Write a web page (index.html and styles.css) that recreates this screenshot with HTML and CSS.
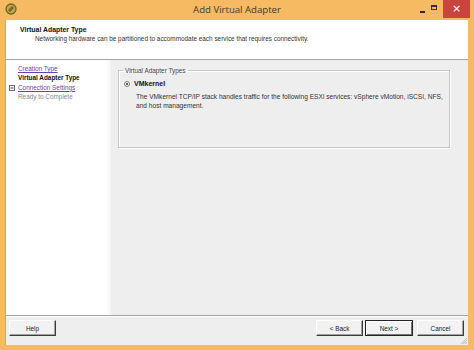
FILE: index.html
```html
<!DOCTYPE html>
<html>
<head>
<meta charset="utf-8">
<link rel="stylesheet" href="styles.css">
</head>
<body>
<div class="window">
  <div class="titlebar">
    <svg class="app-icon" width="12" height="12" viewBox="0 0 12 12">
      <circle cx="6" cy="6" r="5" fill="#c9a24a" stroke="#6b6a2a" stroke-width="1.3"/>
      <path d="M3.5 7.5 L7.5 3.5 M4.5 8.5 L8.5 4.5" stroke="#5d6a22" stroke-width="1.2"/>
    </svg>
    <div class="title">Add Virtual Adapter</div>
    <div class="controls">
      <span class="ctl min"><span class="min-bar"></span></span>
      <span class="ctl max"><span class="max-box"></span></span>
      <span class="ctl close">×</span>
    </div>
  </div>
  <div class="frame">
    <div class="header">
      <div class="h-title">Virtual Adapter Type</div>
      <div class="h-sub">Networking hardware can be partitioned to accommodate each service that requires connectivity.</div>
    </div>
    <div class="main">
      <div class="nav">
        <div class="nav-item link">Creation Type</div>
        <div class="nav-item current">Virtual Adapter Type</div>
        <div class="nav-item link has-box"><svg class="expander" width="6" height="6" viewBox="0 0 6 6"><rect x="0.5" y="0.5" width="5" height="5" fill="#fff" stroke="#6a6a6a"/><path d="M1.5 3 H4.5" stroke="#333"/></svg>Connection Settings</div>
        <div class="nav-item pending">Ready to Complete</div>
      </div>
      <div class="content">
        <fieldset class="group">
          <legend>Virtual Adapter Types</legend>
          <div class="option">
            <span class="radio"><span class="dot"></span></span>
            <span class="opt-label">VMkernel</span>
          </div>
          <p class="desc">The VMkernel TCP/IP stack handles traffic for the following ESXi services: vSphere vMotion, iSCSI, NFS,<br>and host management.</p>
        </fieldset>
      </div>
    </div>
    <div class="footer">
      <button class="btn">Help</button>
      <div class="spacer"></div>
      <button class="btn">&lt; Back</button>
      <button class="btn default">Next &gt;</button>
      <button class="btn cancel">Cancel</button>
      <svg class="grip" width="8" height="8" viewBox="0 0 8 8">
        <path d="M7 1 L1 7 M7 3 L3 7 M7 5 L5 7" stroke="#b0b0b0" stroke-width="0.8"/>
      </svg>
    </div>
  </div>
</div>
</body>
</html>
```
FILE: styles.css
```css
* { box-sizing: border-box; }
html, body { margin: 0; padding: 0; }
body {
  width: 474px;
  height: 350px;
  overflow: hidden;
  font-family: "Liberation Sans", Arial, sans-serif;
  font-size: 6.4px;
  color: #222;
}
.window {
  width: 474px;
  height: 350px;
  background: #f6ba63;
  display: flex;
  flex-direction: column;
}
.titlebar {
  height: 20px;
  display: flex;
  align-items: center;
  position: relative;
  flex: none;
}
.app-icon { margin-left: 5px; margin-top: -2px; }
.title {
  position: absolute;
  left: 0; right: 0; top: 3px;
  text-align: center;
  font-family: "Open Sans", "Liberation Sans", sans-serif;
  font-size: 9.6px;
  color: #3a3a3a;
}
.controls {
  margin-left: auto;
  display: flex;
  align-self: flex-start;
  height: 18px;
  margin-right: 4px;
  position: relative;
}
.ctl { display: flex; align-items: center; justify-content: center; height: 18px; }
.min { width: 12px; }
.min-bar { display: block; width: 5px; height: 2px; background: #2a2a2a; margin-top: 6px; }
.max { width: 12px; }
.max-box { display: block; width: 6px; height: 5px; border: 1px solid #333; border-top-width: 2px; margin-top: -4px; }
.close {
  width: 27px;
  margin-left: 3px;
  background: #c8443c;
  color: #fff;
  font-size: 11px;
  font-family: "DejaVu Sans", sans-serif;
  line-height: 18px;
}
.frame {
  flex: 1;
  margin: 0 6px 5px 5px;
  background: #eeeeee;
  border-left: 1px solid #b3aaa0;
  display: flex;
  flex-direction: column;
}
.header {
  height: 40px;
  background: #fff;
  border-bottom: 1px solid #a3a3a3;
  padding: 5px 0 0 14px;
  flex: none;
}
.h-title { font-weight: bold; font-size: 6.9px; color: #111; line-height: 9px; }
.h-sub { padding-left: 15px; line-height: 9px; color: #333; }
.main { flex: 1; display: flex; }
.nav {
  width: 105px;
  flex: none;
  background: linear-gradient(to right, #fff 0, #fff 100px, #f4f4f4 105px);
  padding: 4px 0 0 12px;
}
.nav-item { line-height: 9.4px; height: 9.4px; white-space: nowrap; }
.link { color: #6a3fb0; text-decoration: underline; }
.current { font-weight: bold; color: #111; }
.pending { color: #8a8a8a; }
.has-box { position: relative; }
.expander { position: absolute; left: -9px; top: 2px; }
.content { flex: 1; min-width: 0; padding: 7px 18px 0 7px; }
.group {
  margin: 0;
  min-width: 0;
  height: 81px;
  border: 1px solid #c6c6c6;
  box-shadow: inset 1px 1px 0 #fff, 1px 1px 0 #fff;
  padding: 0 3px 0 5px;
}
.group legend { padding: 0 2px; margin-left: -1px; color: #444; }
.option { display: flex; align-items: center; margin-top: 6px; }
.radio {
  width: 6px; height: 6px;
  border-radius: 50%;
  border: 1px solid #777;
  background: #fff;
  display: flex; align-items: center; justify-content: center;
}
.dot { width: 2px; height: 2px; border-radius: 50%; background: #222; }
.opt-label { font-weight: bold; margin-left: 4px; font-size: 7px; color: #111; }
.desc { margin: 5px 0 0 12px; line-height: 9px; color: #333; font-size: 6.6px; white-space: nowrap; }
.footer {
  height: 30px;
  flex: none;
  border-top: 1px solid #a3a3a3;
  box-shadow: inset 0 1px 0 #fff;
  display: flex;
  align-items: flex-start;
  padding: 4px 0 0 3px;
  position: relative;
}
.spacer { flex: 1; }
.btn {
  height: 16px;
  width: 47px;
  padding: 0;
  margin: 0;
  font-family: "Liberation Sans", Arial, sans-serif;
  font-size: 6.4px;
  color: #222;
  background: #f2f2f2;
  border: 1px solid;
  border-color: #fff #3c3c3c #3c3c3c #fff;
  box-shadow: inset -1px -1px 0 #a0a0a0;
}
.btn + .btn { margin-left: 2px; }
.btn.default { border: 1px solid #222; box-shadow: inset 1px 1px 0 #fff, inset -1px -1px 0 #777; width: 48px; }
.btn.cancel { margin-left: 4px; margin-right: 4px; }
.grip { position: absolute; right: 0; bottom: 0; }
```
